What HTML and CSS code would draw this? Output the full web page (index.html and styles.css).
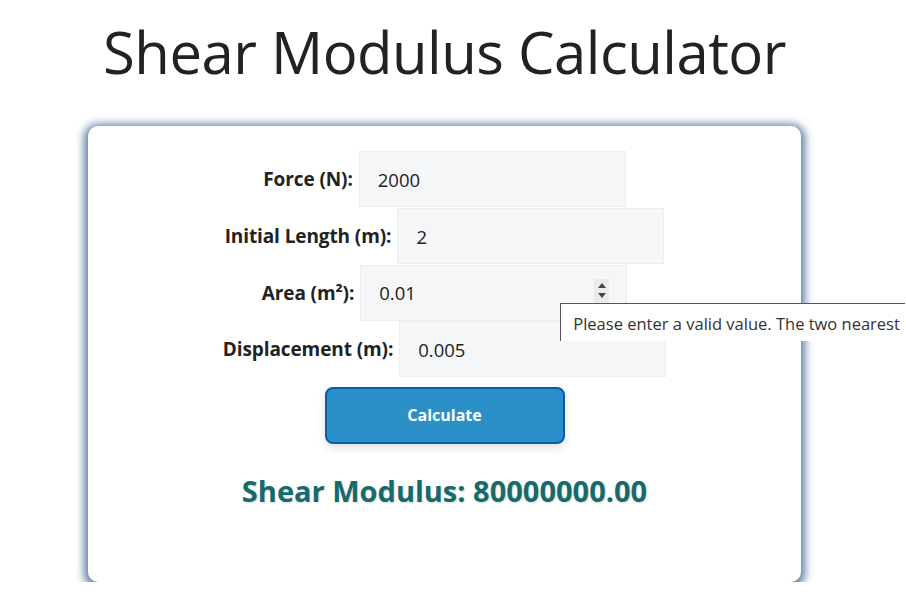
FILE: index.html
```html
<!DOCTYPE html>
<html lang="en">
<head>
<meta charset="utf-8">
<title>Shear Modulus Calculator</title>
<link rel="stylesheet" href="styles.css">
</head>
<body>
<div class="page">
  <h1 class="title">Shear Modulus Calculator</h1>
  <div class="card">
    <div class="row">
      <label class="label" for="force">Force (N):</label>
      <input class="field" id="force" type="text" value="2000">
    </div>
    <div class="row">
      <label class="label" for="length">Initial Length (m):</label>
      <input class="field" id="length" type="text" value="2">
    </div>
    <div class="row">
      <label class="label" for="area">Area (m²):</label>
      <div class="field-wrap">
        <input class="field" id="area" type="text" value="0.01">
        <span class="spin"><span class="spin-up"></span><span class="spin-down"></span></span>
        <div class="tooltip">Please enter a valid value. The two nearest</div>
      </div>
    </div>
    <div class="row">
      <label class="label" for="disp">Displacement (m):</label>
      <input class="field" id="disp" type="text" value="0.005">
    </div>
    <button class="btn" type="button">Calculate</button>
    <div class="result">Shear Modulus: 80000000.00</div>
  </div>
</div>
</body>
</html>
```
FILE: styles.css
```css
html, body {
  margin: 0;
  padding: 0;
  background: #ffffff;
  overflow: hidden;
}
body {
  font-family: "Open Sans", "Noto Sans", "Liberation Sans", sans-serif;
  color: #222;
}
.page {
  width: 889px;
  display: flex;
  flex-direction: column;
  align-items: center;
}
.title {
  margin: 12px 0 0;
  font-size: 58px;
  font-weight: 400;
  line-height: 80px;
  color: #222;
  letter-spacing: -0.5px;
}
.card {
  margin-top: 34px;
  width: 713px;
  height: 456px;
  box-sizing: border-box;
  background: #fff;
  border-radius: 10px;
  box-shadow: 0 2px 8px 4px rgba(60, 95, 145, 0.8);
  padding-top: 25px;
  display: flex;
  flex-direction: column;
  align-items: center;
}
.row {
  display: flex;
  align-items: center;
  height: 56.7px;
}
.label {
  font-weight: 700;
  font-size: 19px;
  color: #222;
  margin-right: 6px;
  letter-spacing: -0.1px;
}
.field-wrap {
  position: relative;
}
.field {
  width: 267px;
  height: 56px;
  box-sizing: border-box;
  border: 1px solid #eceef1;
  background: #f5f6f8;
  font-family: inherit;
  font-size: 18.5px;
  color: #222;
  padding: 0 18px;
  outline: none;
  display: block;
}
.spin {
  position: absolute;
  right: 18px;
  top: 14px;
  width: 15px;
  height: 24px;
  background: #ebebeb;
  display: flex;
  flex-direction: column;
  align-items: center;
  justify-content: center;
  gap: 5px;
}
.spin-up {
  width: 0;
  height: 0;
  border-left: 4px solid transparent;
  border-right: 4px solid transparent;
  border-bottom: 5px solid #444;
}
.spin-down {
  width: 0;
  height: 0;
  border-left: 4px solid transparent;
  border-right: 4px solid transparent;
  border-top: 5px solid #444;
}
.tooltip {
  position: absolute;
  left: 200px;
  top: 38px;
  width: 345px;
  height: 38px;
  box-sizing: border-box;
  padding: 8px 0 0 12px;
  background: #fff;
  border-top: 1px solid #555;
  border-left: 1px solid #555;
  white-space: nowrap;
  overflow: hidden;
  font-size: 16.5px;
  color: #333;
  z-index: 5;
}
.btn {
  margin-top: 9px;
  width: 240px;
  height: 57px;
  background: #2b8fc8;
  border: 2px solid #0e5aa5;
  border-radius: 8px;
  color: #fff;
  font-family: inherit;
  font-weight: 700;
  font-size: 16px;
  box-shadow: 0 4px 8px rgba(0, 0, 0, 0.12);
}
.result {
  margin-top: 27px;
  font-weight: 700;
  font-size: 29px;
  color: #176a6b;
  text-shadow: 1px 1px 2px rgba(0, 0, 0, 0.15);
}
```
